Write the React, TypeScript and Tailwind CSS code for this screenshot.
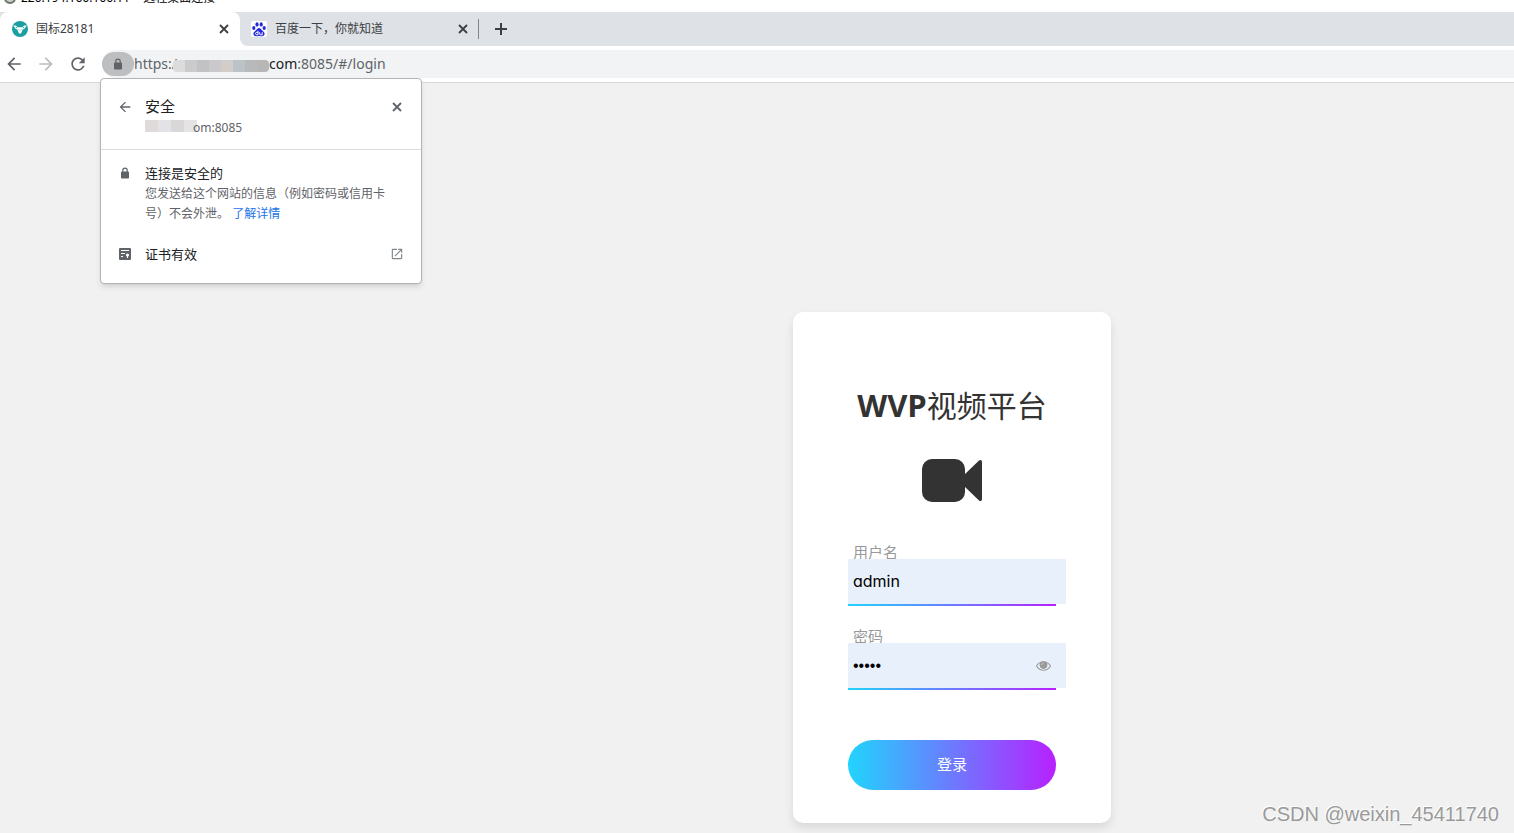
import type { ReactNode } from "react";
import { MdArrowBack, MdArrowForward, MdOpenInNew, MdRefresh } from "react-icons/md";

const URL_BLOCKS = ["bg-[#dcdcdc]", "bg-[#cbcbcb]", "bg-[#c2c2c4]", "bg-[#c9c9cb]", "bg-[#d3cdca]", "bg-[#bcc3c8]", "bg-[#b7b9ba]", "bg-[#b7b7b7]"];
const HOST_BLOCKS = ["bg-[#dfdbdb]", "bg-[#e3e3e7]", "bg-[#dad7d8]", "bg-[#e4e4e4]"];

function GoatIcon() {
  return (
    <svg viewBox="0 0 16 16" className="size-4 shrink-0" aria-hidden="true">
      <circle cx="8" cy="8" r="8" fill="#1b9fa3" />
      <path d="M1 5c2-.8 3.600-.3 4.500 1.200h5C11.400 4.700 13 4.200 15 5c-1 .3-1.500.8-2 2-.5 1-1.300 1.400-2.300 1.400L9 12.500H7L5.300 8.400C4.300 8.400 3.500 8 3 7c-.5-1.200-1-1.700-2-2z" fill="#fff" />
      <path d="M3.500 6c1-.2 1.500.3 1.800 1.300C4.400 7.300 3.900 6.900 3.500 6zM12.500 6c-1-.2-1.500.3-1.800 1.300.9 0 1.400-.4 1.800-1.300zM6.500 8l1.100 2.500L7 8zM9.500 8l-1.100 2.500L9 8z" fill="#1b9fa3" />
    </svg>
  );
}

function PawIcon() {
  return (
    <svg viewBox="0 0 16 16" className="size-4 shrink-0" aria-hidden="true">
      <rect width="16" height="16" rx="2" fill="#fff" />
      <g fill="#2529d8">
        <ellipse cx="2.800" cy="7" rx="1.600" ry="2.100" />
        <ellipse cx="6" cy="3.400" rx="1.600" ry="2.200" />
        <ellipse cx="10.200" cy="3.400" rx="1.600" ry="2.200" />
        <ellipse cx="13.200" cy="7" rx="1.600" ry="2.100" />
        <path d="M8 7c1.400 0 2 1.100 3 2.300 1 1.100 2.600 1.900 2.600 3.500 0 1.500-1 2.500-2.600 2.500-1 0-2-.3-3-.3s-2 .3-3 .3c-1.600 0-2.600-1-2.600-2.500 0-1.600 1.600-2.400 2.600-3.500C6 8.100 6.600 7 8 7z" />
      </g>
      <path d="M7 9.800v4H5.700c-1.600 0-1.600-2.500 0-2.500H7M8.700 11.200v2c0 .4.200.6.600.6h1.900v-2.600" fill="none" stroke="#fff" />
    </svg>
  );
}

function CloseIcon() {
  return (
    <svg viewBox="0 0 10 10" className="size-[10px]" aria-hidden="true">
      <path d="M1 1l8 8M9 1L1 9" stroke="currentColor" strokeWidth="1.800" />
    </svg>
  );
}

function LockIcon() {
  return (
    <svg viewBox="0 0 10 12" className="h-3 w-[10px]" aria-hidden="true">
      <rect x="1" y="4.500" width="8" height="7" rx="0.800" fill="#5f6368" />
      <path d="M2.800 5V3.300a2.200 2.200 0 0 1 4.400 0V5" fill="none" stroke="#5f6368" strokeWidth="1.200" />
    </svg>
  );
}

function CertificateIcon() {
  return (
    <svg viewBox="0 0 12 12" className="size-3" aria-hidden="true">
      <rect width="12" height="12" rx="1" fill="#5f6368" />
      <path d="M2 2.500h8M2 5.500h4M2 8.500h2" stroke="#fff" />
      <circle cx="8.500" cy="7" r="1.600" fill="#fff" />
      <path d="M8 8h1v2H8z" fill="#fff" />
    </svg>
  );
}

function CameraIcon() {
  return (
    <svg viewBox="0 0 60 43" className="h-[43px] w-[60px]" aria-hidden="true">
      <path
        d="M10 0h23a10 10 0 0 1 10 10v5L57 1.500Q60 0 60 3v37q0 3-3 1.500L43 28v5a10 10 0 0 1-10 10H10A10 10 0 0 1 0 33V10A10 10 0 0 1 10 0z"
        fill="#333"
      />
    </svg>
  );
}

function EyeIcon() {
  return (
    <svg viewBox="0 0 1792 1792" className="size-[15px]" fill="currentColor" aria-hidden="true">
      <path d="M1664 960q-152-236-381-353 61 104 61 225 0 185-131.500 316.500t-316.500 131.500-316.500-131.500-131.500-316.500q0-121 61-225-229 117-381 353 133 205 333.500 326.500t434.500 121.500 434.500-121.500 333.500-326.500zm-720-384q0-20-14-34t-34-14q-125 0-214.500 89.500t-89.500 214.500q0 20 14 34t34 14 34-14 14-34q0-86 61-147t147-61q20 0 34-14t14-34zm848 384q0 34-20 69-140 230-376.500 368.500t-499.500 138.500-499.500-139-376.500-368q-20-35-20-69t20-69q140-229 376.500-368t499.500-139 499.500 139 376.500 368q20 35 20 69z" />
      <path d="M896 1280a448 448 0 0 0 448-448 448 448 0 0 0-200-380 700 700 0 0 0-496 0 448 448 0 0 0-200 380 448 448 0 0 0 448 448z" />
      <path d="M660 850q10-200 240-250" fill="none" stroke="#e8f0fb" strokeWidth="70" />
    </svg>
  );
}

interface TabProps {
  title: string;
  icon: ReactNode;
  active?: boolean;
}

function Tab({ title, icon, active }: TabProps) {
  return (
    <div
      className={`flex h-[34px] items-center gap-2 text-xs text-[#3c4043] ${
        active ? "w-60 rounded-t-lg bg-white pr-[11px] pl-3" : "w-[238px] rounded-bl-lg bg-[#dee1e6] pr-[10px] pl-[11px]"
      }`}
    >
      {icon}
      <span className="flex-1">{title}</span>
      <button type="button" aria-label={`关闭 ${title}`}>
        <CloseIcon />
      </button>
    </div>
  );
}

function TabStrip() {
  return (
    <div className="flex items-center bg-[#dee1e6]">
      <Tab active title="国标28181" icon={<GoatIcon />} />
      <div className="bg-white">
        <Tab title="百度一下，你就知道" icon={<PawIcon />} />
      </div>
      <span className="h-5 w-px bg-[#80868b]" />
      <button type="button" aria-label="新标签页" className="ml-4 text-[#3c4043]">
        <svg viewBox="0 0 12 12" className="size-3" aria-hidden="true">
          <path d="M6 0v12M0 6h12" stroke="currentColor" strokeWidth="2" />
        </svg>
      </button>
    </div>
  );
}

function Toolbar() {
  return (
    <div className="flex h-[37px] items-center border-b border-[#d5d7da] bg-white pl-1 text-[#5f6368]">
      <button type="button" aria-label="后退">
        <MdArrowBack className="size-5" />
      </button>
      <button type="button" aria-label="前进" className="ml-3 text-[#babcbe]">
        <MdArrowForward className="size-5" />
      </button>
      <button type="button" aria-label="重新加载" className="ml-3">
        <MdRefresh className="size-5" />
      </button>
      <div className="ml-[14px] flex h-7 flex-1 items-center rounded-l-full bg-[#f1f3f4] text-sm">
        <button type="button" aria-label="查看网站信息" className="flex h-6 w-8 items-center justify-center rounded-full bg-[#bdbebf]">
          <LockIcon />
        </button>
        <span>https:/</span>
        <span className="mt-1 -ml-1 flex overflow-hidden rounded-sm">
          {URL_BLOCKS.map((color) => (
            <span key={color} className={`size-3 ${color}`} />
          ))}
        </span>
        <span>
          <span className="text-[#202124]">com</span>:8085/#/login
        </span>
      </div>
    </div>
  );
}

function SecurityPopup() {
  return (
    <section className="absolute top-[78px] left-[100px] w-[322px] rounded border border-[#b4b4b4] bg-white pb-[19px] text-[#202124] shadow-md">
      <header className="flex border-b border-[#dadce0] pt-[17px] pr-[19px] pb-[9px] pl-4">
        <button type="button" aria-label="返回" className="mt-[3px] self-start text-[#5f6368]">
          <MdArrowBack className="size-4" />
        </button>
        <div className="ml-3 flex-1">
          <h2 className="text-[15px] leading-5">安全</h2>
          <div className="flex h-6 items-center text-xs text-[#5f6368]">
            <span className="mb-1 flex">
              {HOST_BLOCKS.map((color) => (
                <span key={color} className={`h-3 w-[13px] ${color}`} />
              ))}
            </span>
            <span className="-ml-1">om:8085</span>
          </div>
        </div>
        <button type="button" aria-label="关闭" className="mt-[6px] self-start text-[#5f6368]">
          <CloseIcon />
        </button>
      </header>
      <div className="flex pt-[13px] pr-8 pl-[19px]">
        <span className="mt-1">
          <LockIcon />
        </span>
        <div className="ml-[15px] flex-1">
          <h3 className="mb-px text-[13px] leading-5">连接是安全的</h3>
          <p className="text-xs leading-5 text-[#5f6368]">
            您发送给这个网站的信息（例如密码或信用卡号）不会外泄。{" "}
            <a href="#details" className="text-[#1a73e8]">
              了解详情
            </a>
          </p>
        </div>
      </div>
      <button type="button" className="mt-5 flex w-full items-center pr-[17px] pl-[18px] text-[13px] leading-5">
        <CertificateIcon />
        <span className="ml-[14px] flex-1 text-left">证书有效</span>
        <MdOpenInNew className="size-[14px] text-[#80868b]" />
      </button>
    </section>
  );
}

interface FieldProps {
  id: string;
  label: string;
  type: "text" | "password";
  value: string;
  children?: ReactNode;
}

function Field({ id, label, type, value, children }: FieldProps) {
  return (
    <div>
      <label htmlFor={id} className="block h-[15px] pl-[5px] text-[15px] leading-[17px] text-[#999]">
        {label}
      </label>
      <div className="relative -mr-[10px]">
        <input
          id={id}
          type={type}
          defaultValue={value}
          className={`block h-[45px] w-full bg-[#e8f0fb] px-[5px] text-base text-black outline-none ${
            type === "password"
              ? "font-['Liberation_Sans',sans-serif]"
              : "pb-[2px] font-['Inter','Noto_Sans_CJK_SC',sans-serif] [font-feature-settings:'cv11']"
          }`}
        />
        {children}
      </div>
      <div className="h-[2px] bg-linear-to-r/srgb from-[#21d4fd] to-[#b721ff]" />
    </div>
  );
}

function LoginCard() {
  return (
    <form className="flex w-[318px] flex-col rounded-[10px] bg-white px-[55px] pt-[75px] pb-[33px] shadow-[0_5px_10px_0_rgba(0,0,0,0.1)]">
      <h1 className="text-center text-[30px] leading-9 whitespace-nowrap text-[#333]">
        <span className="font-['Open_Sans',sans-serif] text-[31px] font-bold">WVP</span>视频平台
      </h1>
      <div className="mt-[35px] mb-[42px] flex justify-center">
        <CameraIcon />
      </div>
      <div className="flex flex-col gap-[22px]">
        <Field id="username" label="用户名" type="text" value="admin" />
        <Field id="password" label="密码" type="password" value="admin">
          <button type="button" aria-label="显示密码" className="absolute top-[15px] right-[15px] text-[#999]">
            <EyeIcon />
          </button>
        </Field>
      </div>
      <button
        type="button"
        className="mt-[50px] h-[50px] rounded-full bg-linear-to-r/srgb from-[#21d4fd] to-[#b721ff] pb-[2px] text-[15px] text-white"
      >
        登录
      </button>
    </form>
  );
}

export default function App() {
  return (
    <div className="relative flex min-h-screen flex-col bg-[#f1f1f1] font-['Noto_Sans','Noto_Sans_CJK_SC',sans-serif]">
      <div className="flex h-3 items-start gap-[5px] overflow-hidden bg-white pl-1 text-xs leading-3 text-black">
        <span className="-mt-2 size-3 shrink-0 rounded-full border-2 border-[#6b756b] bg-[#c9d4c9]" />
        <span className="-mt-2 whitespace-pre">220.194.166.166:11 -  远程桌面连接</span>
      </div>
      <TabStrip />
      <Toolbar />
      <main className="flex flex-1 justify-center pt-[229px] pb-[10px] pl-[390px]">
        <LoginCard />
      </main>
      <SecurityPopup />
      <p className="absolute right-[15px] bottom-[7px] font-['Liberation_Sans',sans-serif] text-[20px] leading-6 text-[#9a9a9a] [text-shadow:-1px_-1px_0_#fff]">
        CSDN @weixin_45411740
      </p>
    </div>
  );
}
